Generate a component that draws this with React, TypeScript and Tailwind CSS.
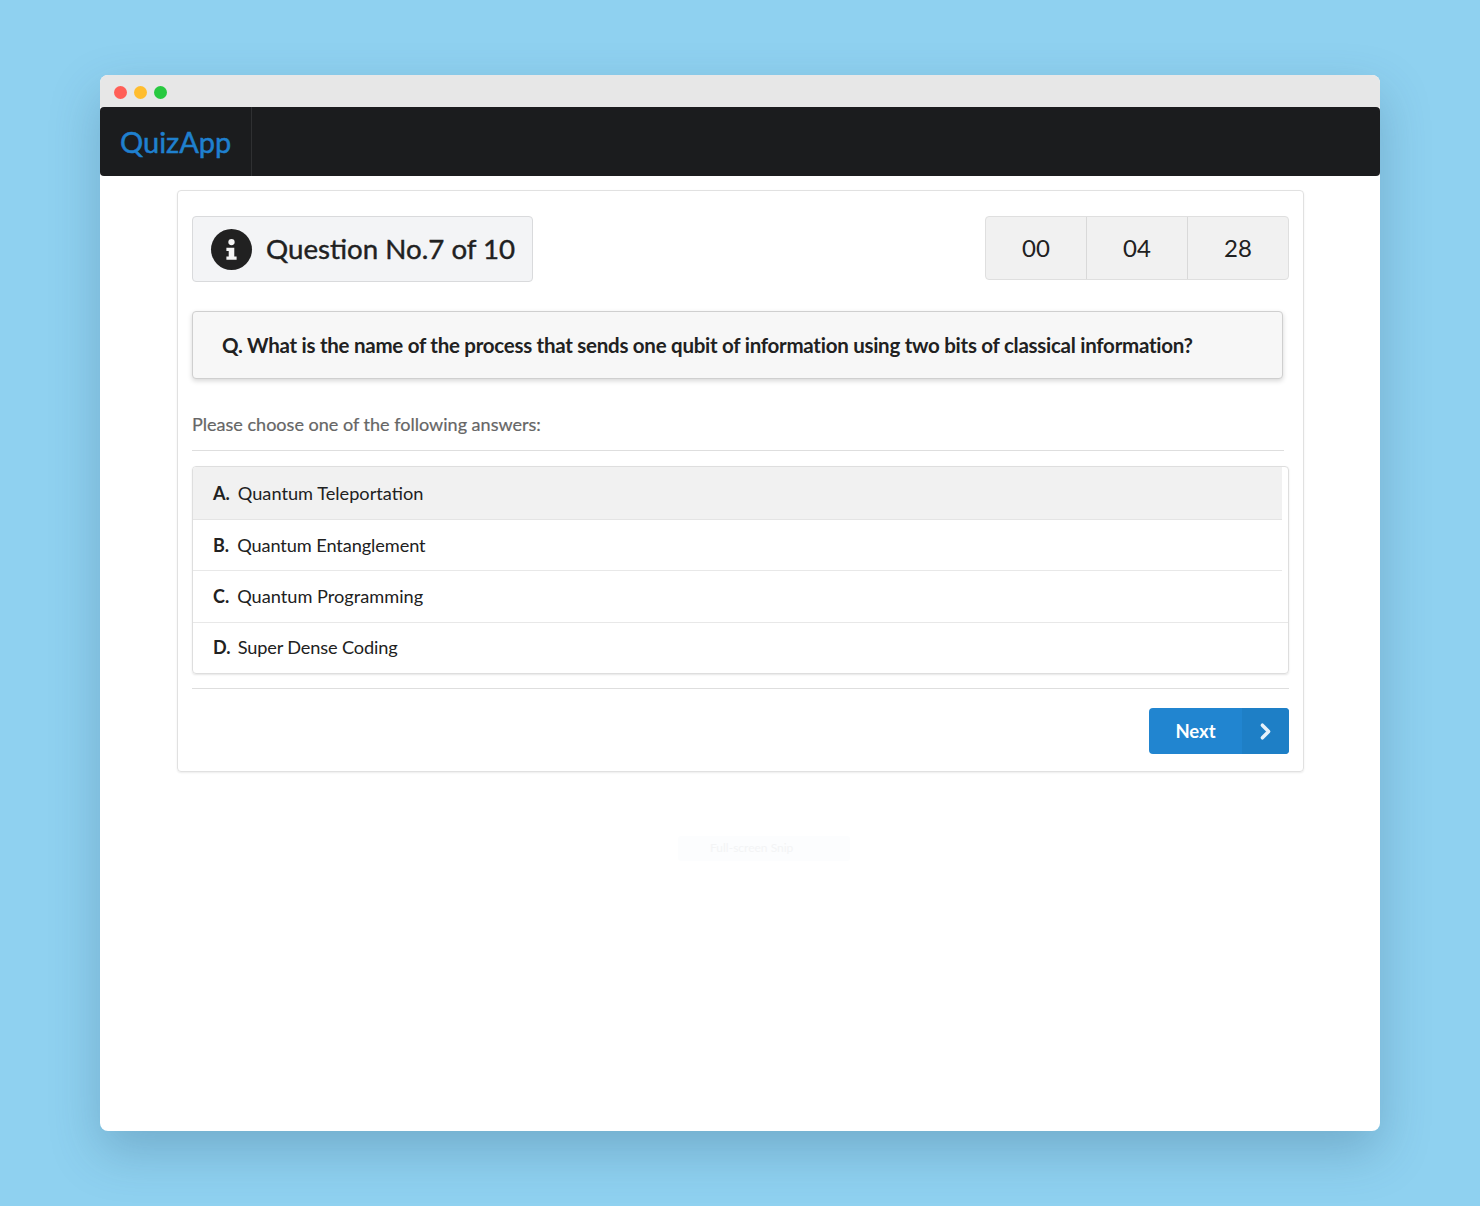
import { ChevronRight } from 'lucide-react';

const answers = [
  { key: 'A.', text: 'Quantum Teleportation', rowClass: 'h-[53px] mr-[6px] bg-[#f1f1f1] border-b border-[#e4e4e4]', gap: 'ml-[8px]' },
  { key: 'B.', text: 'Quantum Entanglement', rowClass: 'h-[51px] mr-[6px] border-b border-[#e8e8e8]', gap: 'ml-[8px] tracking-[-0.1px]' },
  { key: 'C.', text: 'Quantum Programming', rowClass: 'h-[52px] mr-[6px] pb-[1px] border-b border-[#e8e8e8]', gap: 'ml-[8px]' },
  { key: 'D.', text: 'Super Dense Coding', rowClass: 'h-[51px] pb-[2px] border-t border-[#e8e8e8] -mt-px', gap: 'ml-[7px] tracking-[-0.15px]' },
];

const timer = ['00', '04', '28'];

export default function App() {
  return (
    <div className="relative h-[1206px] w-[1480px] overflow-hidden bg-[#8fd1f0] pt-[75px] pl-[100px] font-['Lato','Carlito','Liberation_Sans',sans-serif] text-[#212121]">
      <div className="relative h-[1056px] w-[1280px] rounded-[8px] bg-white shadow-[0_20px_50px_rgba(40,80,110,0.28)]">
        {/* Window bar */}
        <div className="flex h-[32px] items-center gap-[7px] rounded-t-[8px] bg-[#e7e7e7] pl-[13.5px] pt-[2px]">
          <span className="h-[13px] w-[13px] rounded-full bg-[#ff5f57]" />
          <span className="h-[13px] w-[13px] rounded-full bg-[#ffbd2e]" />
          <span className="h-[13px] w-[13px] rounded-full bg-[#28c940]" />
        </div>

        {/* Navbar */}
        <div className="flex h-[69px] rounded-[4px] bg-[#1b1c1e]">
          <div className="flex w-[152px] items-center border-r border-[#2f3032] pl-[20px] text-[29px] leading-none text-[#1f80cf] [-webkit-text-stroke:0.5px_#1f80cf]">
            <span>QuizApp</span>
          </div>
        </div>

        {/* Quiz card */}
        <div className="ml-[77px] mt-[14px] h-[582px] w-[1127px] rounded-[4px] border border-[#e1e1e1] px-[14px] pt-[25px] shadow-[0_1px_2px_rgba(0,0,0,0.08)]">
          <div className="flex items-start justify-between">
            <div className="flex h-[66px] w-[341px] items-center rounded-[4px] border border-[#d9dadc] bg-[#f3f4f6] pl-[18px]">
              <span className="flex h-[41px] w-[41px] items-center justify-center rounded-full bg-[#212121]">
                <svg viewBox="0 0 14 24" className="h-[23px] w-[13px]" fill="#f5f5f5">
                  <circle cx="7" cy="4" r="3.4" />
                  <path d="M1.5 10h8.5v9.5h2.5V23H1.5v-3.500h2.500v-6H1.500z" />
                </svg>
              </span>
              <span className="ml-[14px] whitespace-nowrap text-[27.7px] leading-none [-webkit-text-stroke:0.4px_#212121]">Question No.7 of 10</span>
            </div>

            <div className="flex h-[64px] w-[304px] rounded-[4px] border border-[#dfdfdf] bg-[#f1f1f1]">
              {timer.map((value, i) => (
                <div
                  key={value}
                  className={`flex flex-1 items-center justify-center text-[24px] leading-none ${i < 2 ? 'border-r border-[#d9d9d9]' : ''}`}
                >
                  {value}
                </div>
              ))}
            </div>
          </div>

          <div className="mt-[29px] flex h-[68px] w-[1091px] items-center whitespace-nowrap rounded-[4px] border border-[#cfcfcf] bg-[#f7f7f7] pl-[29px] text-[20.5px] font-bold leading-none tracking-[-0.27px] shadow-[0_2px_5px_rgba(0,0,0,0.16)]">
            Q. What is the name of the process that sends one qubit of information using two bits of classical information?
          </div>

          <p className="mt-[35px] h-[20px] text-[18.05px] leading-[20px] text-[#666666] [-webkit-text-stroke:0.2px_#666666]">
            Please choose one of the following answers:
          </p>
          <div className="mt-[16px] w-[1092px] border-t border-[#dedede]" />

          <div className="mt-[15px] h-[208px] w-[1097px] overflow-hidden rounded-[4px] border border-[#dedede] shadow-[0_1px_2px_rgba(0,0,0,0.1)]">
            {answers.map((a) => (
              <div key={a.key} className={`flex items-center pl-[20px] ${a.rowClass}`}>
                <span className="text-[18px] font-bold leading-none">{a.key}</span>
                <span className={`text-[18.2px] leading-none ${a.gap}`}>{a.text}</span>
              </div>
            ))}
          </div>

          <div className="mt-[14px] w-[1097px] border-t border-[#dedede]" />

          <div className="mt-[19px] flex w-[1097px] justify-end">
            <button className="flex h-[46px] w-[140px] overflow-hidden rounded-[4px] bg-[#2185d0] text-white">
              <span className="flex h-full w-[93px] items-center justify-center text-[18.5px] font-bold leading-none">
                Next
              </span>
              <span className="flex h-full w-[47px] items-center justify-center bg-[#1e7fc6]">
                <ChevronRight size={25} strokeWidth={3.4} className="text-[#e6f1fa]" />
              </span>
            </button>
          </div>
        </div>

        {/* Faint snip label */}
        <div className="absolute left-[578px] top-[761px] flex h-[25px] w-[172px] items-center rounded-[3px] bg-[#fcfdfe] pb-[2px] pl-[32px] text-[12px] leading-none text-[#f3f4f5]">
          Full-screen Snip
        </div>
      </div>
    </div>
  );
}
